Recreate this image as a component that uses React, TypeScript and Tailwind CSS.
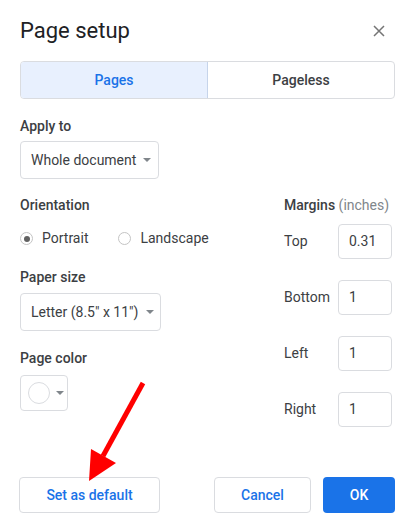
import React from 'react';

const font = { fontFamily: 'Roboto, "Noto Sans", Arial, sans-serif' };

const Caret = () => (
  <svg width="8" height="4" viewBox="0 0 8 4" className="shrink-0">
    <path d="M0 0 L8 0 L4 4 Z" fill="#80868b" />
  </svg>
);

const Label: React.FC<{ children: React.ReactNode }> = ({ children }) => (
  <div className="text-[14px] leading-[20px] font-medium text-[#3c4043]">{children}</div>
);

const Radio: React.FC<{ checked?: boolean; label: string }> = ({ checked, label }) => (
  <label className="flex items-center gap-[9px]">
    <span className="w-[13px] h-[13px] rounded-full border border-[#c4c4c4] bg-white flex items-center justify-center">
      {checked && <span className="w-[6px] h-[6px] rounded-full bg-[#616161]" />}
    </span>
    <span className="text-[14px] text-[#3c4043]">{label}</span>
  </label>
);

const MarginRow: React.FC<{ label: string; value: string }> = ({ label, value }) => (
  <div className="flex items-center h-[35px]">
    <span className="w-[54px] text-[14px] text-[#3c4043]">{label}</span>
    <div className="w-[54px] h-[35px] border border-[#dadce0] rounded-[4px] flex items-center pl-[10px] text-[14px] text-[#3c4043]">
      {value}
    </div>
  </div>
);

export default function App() {
  return (
    <div className="relative w-[409px] h-[528px] bg-white overflow-hidden" style={font}>
      <div className="pl-[20px] pr-[14px]">
        {/* header */}
        <div className="flex items-center justify-between pt-[16px] h-[46px]">
          <h1 className="text-[22px] leading-[28px] text-[#202124]">Page setup</h1>
          <svg width="12" height="12" viewBox="0 0 12 12" className="mr-[10px]">
            <path d="M1 1 L11 11 M11 1 L1 11" stroke="#757575" strokeWidth="1.5" />
          </svg>
        </div>

        {/* tabs */}
        <div className="mt-[15px] flex h-[38px] border border-[#dadce0] rounded-[4px] overflow-hidden">
          <div className="flex-1 flex items-center justify-center bg-[#e8f0fe] border-r border-[#c6d4ea] text-[14px] font-medium text-[#1a73e8]">
            Pages
          </div>
          <div className="flex-1 flex items-center justify-center text-[14px] font-medium text-[#3c4043]">
            Pageless
          </div>
        </div>

        {/* apply to */}
        <div className="mt-[17px]">
          <Label>Apply to</Label>
          <div className="mt-[5px] w-[139px] h-[38px] border border-[#dadce0] rounded-[4px] flex items-center pl-[10px] gap-[7px] text-[14px] text-[#3c4043]">
            <span>Whole document</span>
            <Caret />
          </div>
        </div>

        {/* main columns */}
        <div className="mt-[16px] flex">
          <div className="w-[264px]">
            <Label>Orientation</Label>
            <div className="mt-[13px] flex items-center gap-[30px]">
              <Radio checked label="Portrait" />
              <Radio label="Landscape" />
            </div>
            <div className="mt-[18px]">
              <Label>Paper size</Label>
            </div>
            <div className="mt-[6px] w-[141px] h-[38px] border border-[#dadce0] rounded-[4px] flex items-center pl-[10px] gap-[8px] text-[14px] text-[#3c4043]">
              <span>Letter (8.5" x 11")</span>
              <Caret />
            </div>
            <div className="mt-[17px]">
              <Label>Page color</Label>
            </div>
            <div className="mt-[7px] w-[48px] h-[36px] border border-[#dadce0] rounded-[4px] flex items-center pl-[7px] gap-[6px]">
              <span className="w-[22px] h-[22px] rounded-full border border-[#dadce0] bg-white" />
              <Caret />
            </div>
          </div>
          <div>
            <div className="text-[14px] leading-[20px] font-medium text-[#3c4043]">
              Margins <span className="font-normal text-[#80868b]">(inches)</span>
            </div>
            <div className="mt-[9px] flex flex-col gap-[21px]">
              <MarginRow label="Top" value="0.31" />
              <MarginRow label="Bottom" value="1" />
              <MarginRow label="Left" value="1" />
              <MarginRow label="Right" value="1" />
            </div>
          </div>
        </div>

        {/* footer */}
        <div className="mt-[50px] flex items-center">
          <button className="w-[141px] h-[36px] border border-[#dadce0] rounded-[4px] text-[14px] font-medium text-[#1a73e8] -ml-px">
            Set as default
          </button>
          <div className="ml-auto flex gap-[12px]">
            <button className="w-[97px] h-[36px] border border-[#dadce0] rounded-[4px] text-[14px] font-medium text-[#1a73e8]">
              Cancel
            </button>
            <button className="w-[72px] h-[36px] rounded-[4px] bg-[#1a73e8] text-[14px] font-medium text-white">
              OK
            </button>
          </div>
        </div>
      </div>

      {/* annotation arrow */}
      <svg className="absolute left-0 top-0 pointer-events-none" width="409" height="528" viewBox="0 0 409 528">
        <line x1="143" y1="383" x2="103" y2="456" stroke="#ff0000" strokeWidth="5" />
        <polygon points="89,481 91,449 116,463" fill="#ff0000" />
      </svg>
    </div>
  );
}
